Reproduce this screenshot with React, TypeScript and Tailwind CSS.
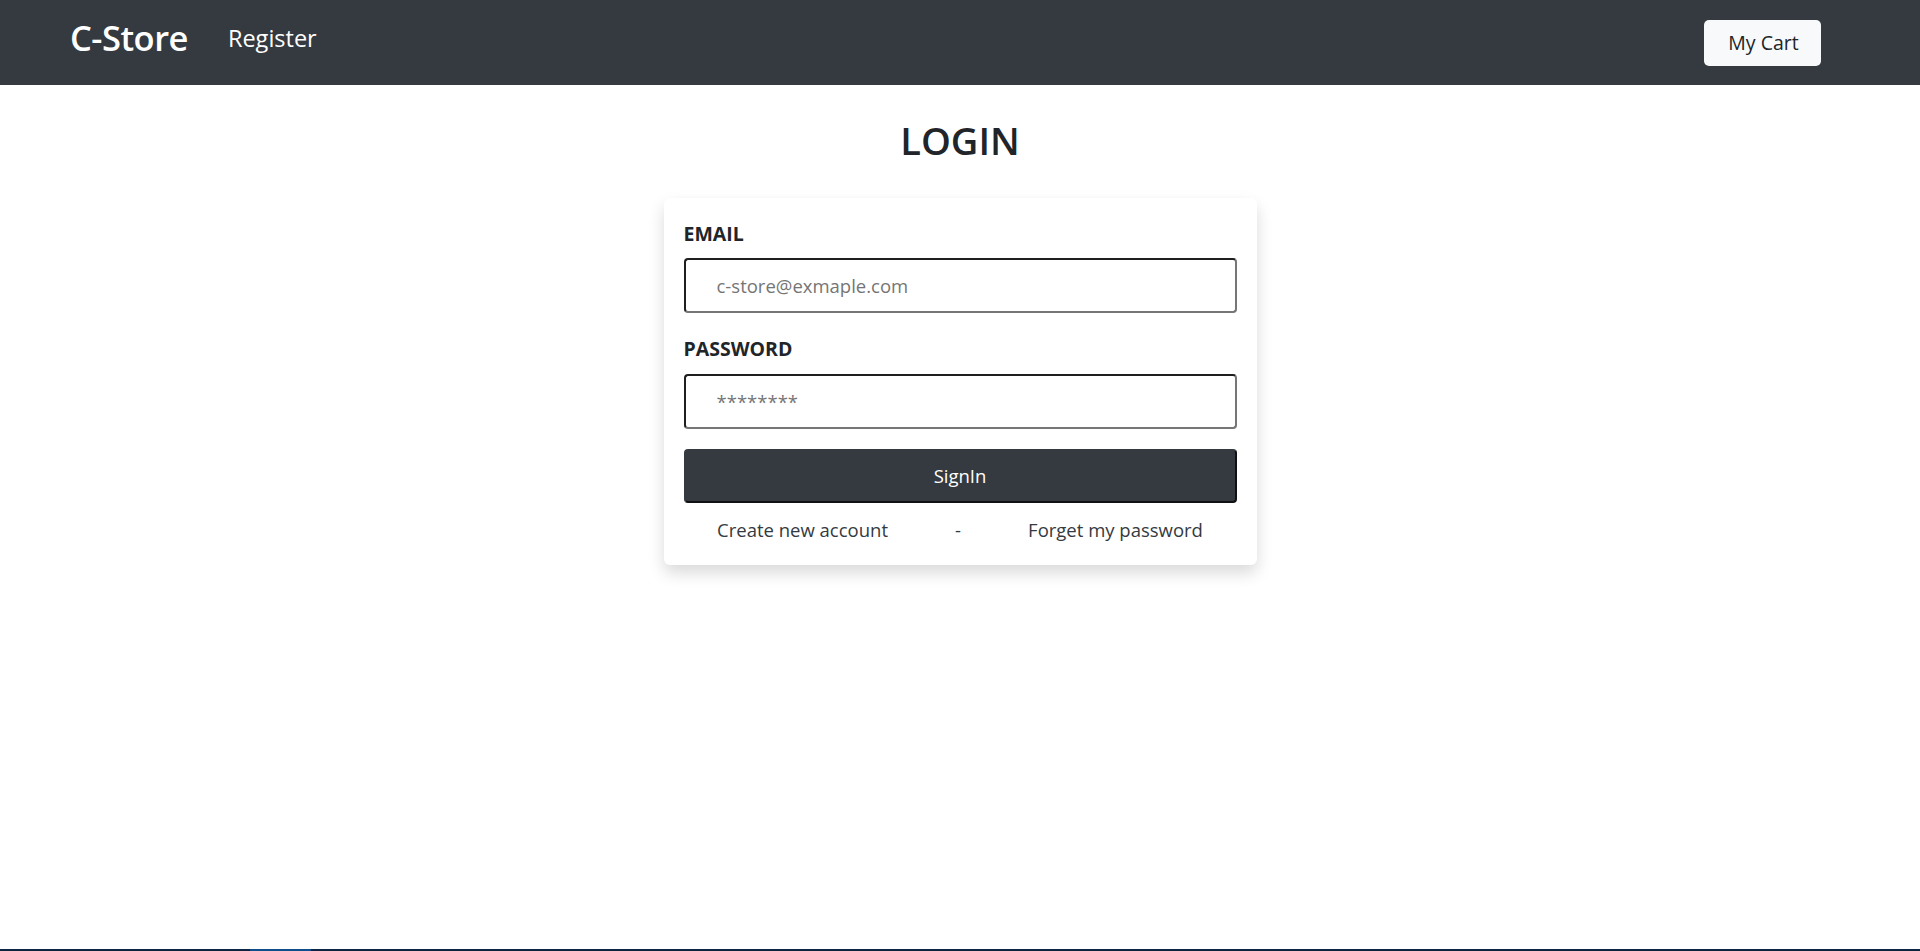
import React from "react";

export default function App() {
  return (
    <div className="h-[951px] flex flex-col bg-white text-[#212529] [font-family:'Open_Sans','Noto_Sans',sans-serif] overflow-hidden">
      <nav className="h-[85px] shrink-0 bg-[#343a40] flex items-center pl-[70px] pr-[99px]">
        <a className="mb-[8px] text-[34.5px] font-semibold text-white leading-none tracking-[-0.5px]">C-Store</a>
        <a className="mb-[8px] ml-[40px] text-[23.5px] text-white leading-none">Register</a>
        <div className="flex-1" />
        <button className="w-[117px] h-[46px] mt-[1px] pl-[2px] rounded-[5px] bg-[#f8f9fa] text-[#212529] text-[19.5px]">
          My Cart
        </button>
      </nav>
      <main className="flex-1 flex flex-col items-center">
        <h1 className="mt-[31px] text-[38px] leading-[48px] font-semibold text-[#212529]">LOGIN</h1>
        <div className="mt-[34px] w-[593px] bg-white rounded-[6px] shadow-[0_8px_16px_rgba(0,0,0,0.15)] p-5">
          <label className="block pt-[1px] text-[19.5px] leading-[30px] font-bold">EMAIL</label>
          <input
            type="email"
            placeholder="c-store@exmaple.com"
            className="mt-[9px] block w-full h-[55px] rounded-[4px] border-2 border-t-[#1f1f1f] border-l-[#1f1f1f] border-r-[#767676] border-b-[#767676] pl-[31px] text-[18.5px] placeholder:text-[#757575] outline-none"
          />
          <label className="mt-[21px] block text-[19.5px] leading-[30px] font-bold">PASSWORD</label>
          <input
            type="password"
            placeholder="********"
            className="mt-[10px] block w-full h-[55px] rounded-[4px] border-2 border-t-[#1f1f1f] border-l-[#1f1f1f] border-r-[#767676] border-b-[#767676] pl-[31px] text-[18.5px] placeholder:text-[#757575] outline-none"
          />
          <button className="mt-[20px] block w-full h-[54px] rounded-[4px] bg-[#343a40] text-white text-[18.5px] border-2 border-t-[#343a40] border-l-[#343a40] border-r-[#111] border-b-[#111]">
            SignIn
          </button>
          <div className="mt-[12px] flex justify-around text-[18.5px] leading-[30px] text-[#343a40]">
            <a>Create new account</a>
            <span>-</span>
            <a>Forget my password</a>
          </div>
        </div>
      </main>
      <div className="h-[2px] shrink-0 bg-[#0b2542] flex">
        <div className="ml-[250px] w-[61px] bg-[#0d4f8b]" />
      </div>
    </div>
  );
}
